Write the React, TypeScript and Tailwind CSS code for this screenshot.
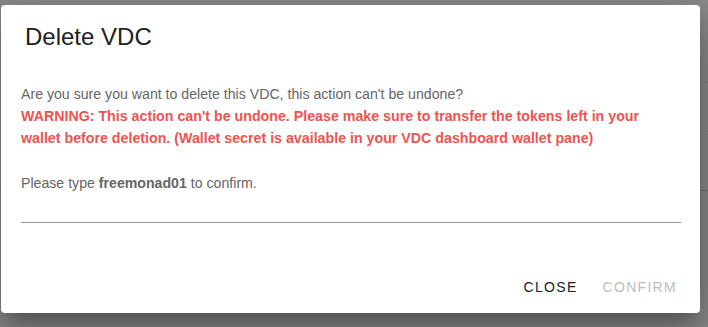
import React from "react";

export default function App() {
  return (
    <div className="relative w-[708px] h-[327px] overflow-hidden bg-[#8a8a8a] font-['Liberation_Sans',Arial,sans-serif]">
      {/* page behind overlay */}
      <div className="flex flex-col">
        <div className="h-[83px] border-b border-[#828282]" />
        <div className="h-[49px] border-b border-[#828282]" />
        <div className="h-[59px] border-b border-[#6e6e6e]" />
      </div>

      {/* dialog */}
      <div className="absolute left-[1px] top-[5px] w-[699px] h-[308px] bg-white rounded-[4px] shadow-[0_11px_15px_-7px_rgba(0,0,0,0.25),0_24px_38px_3px_rgba(0,0,0,0.16),0_9px_46px_8px_rgba(0,0,0,0.14)] flex flex-col">
        <h2 className="pl-[24px] pt-[18px] text-[24px] leading-[28px] text-[#212121] font-normal">
          Delete VDC
        </h2>
        <div className="px-[20px] pt-[32px] flex flex-col">
          <p className="text-[14.15px] leading-[22px] text-[#666666]">
            Are you sure you want to delete this VDC, this action can't be undone?
          </p>
          <p className="w-[650px] text-[14.22px] leading-[22px] font-bold text-[#ef5350]">
            WARNING: This action can't be undone. Please make sure to transfer the tokens left in your wallet
            before deletion. (Wallet secret is available in your VDC dashboard wallet pane)
          </p>
          <p className="mt-[23px] text-[14.15px] leading-[22px] text-[#666666]">
            Please type <span className="font-bold">freemonad01</span> to confirm.
          </p>
          <div className="mt-[8px] h-[21px] border-b border-[#949494] w-[660px]" />
        </div>
        <div className="mt-auto flex justify-end gap-[25px] pr-[23px] pb-[17px]">
          <span className="text-[14px] leading-[18px] tracking-[1.3px] text-[#212121]">CLOSE</span>
          <span className="text-[14px] leading-[18px] tracking-[1.3px] text-[#bdbdbd]">CONFIRM</span>
        </div>
      </div>
    </div>
  );
}
